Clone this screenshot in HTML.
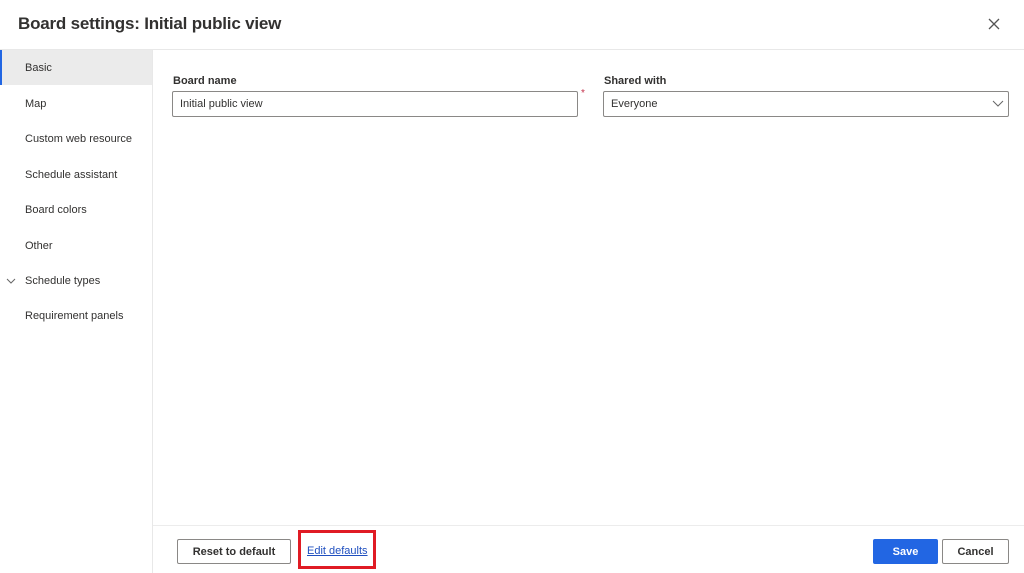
<!DOCTYPE html>
<html><head><style>
*{box-sizing:border-box;margin:0;padding:0}
body{width:1024px;height:573px;background:#fff;font-family:"Liberation Sans",sans-serif;color:#323130;position:relative;overflow:hidden}
.a{position:absolute}
.title{left:18px;top:14px;font-size:17px;font-weight:bold;color:#323130;letter-spacing:-0.2px}
.hdr{left:0;top:49px;width:1024px;height:1px;background:#e8e8e8}
.side{left:152px;top:50px;width:1px;height:523px;background:#e8e8e8}
.nav{left:0;width:152px;height:35px;font-size:11px;line-height:36px;padding-left:25px;color:#323130}
.sel{background:#ebebeb}
.bar{left:0;top:50px;width:2px;height:35px;background:#2266e3}
.lbl{font-size:11px;font-weight:bold;top:75px}
.inp{height:26px;border:1px solid #8a8886;border-radius:2px;font-size:11px;line-height:25px;padding-left:7px;top:91px}
.foot{left:153px;top:525px;width:871px;height:1px;background:#ececec}
.btn{top:539px;height:25px;border:1px solid #8a8886;border-radius:2px;font-size:11px;font-weight:bold;text-align:center;line-height:24px;background:#fff}
</style></head><body>
<div class="a title">Board settings: Initial public view</div>
<svg class="a" style="left:988px;top:18px" width="12" height="12" viewBox="0 0 12 12"><path d="M1 1L11 11M11 1L1 11" stroke="#555" stroke-width="1.3"/></svg>
<div class="a hdr"></div>
<div class="a side"></div>
<div class="a nav sel" style="top:50px">Basic</div>
<div class="a bar"></div>
<div class="a nav" style="top:86px">Map</div>
<div class="a nav" style="top:121px">Custom web resource</div>
<div class="a nav" style="top:157px">Schedule assistant</div>
<div class="a nav" style="top:192px">Board colors</div>
<div class="a nav" style="top:228px">Other</div>
<div class="a nav" style="top:263px">Schedule types</div>
<svg class="a" style="left:6px;top:278px" width="10" height="6" viewBox="0 0 10 6"><path d="M1 1L5 5L9 1" stroke="#666" fill="none" stroke-width="1"/></svg>
<div class="a nav" style="top:298px">Requirement panels</div>
<div class="a lbl" style="left:173px">Board name</div>
<div class="a inp" style="left:172px;width:406px">Initial public view</div>
<div class="a" style="left:581px;top:88px;color:#c4314b;font-size:10px">*</div>
<div class="a lbl" style="left:604px">Shared with</div>
<div class="a inp" style="left:603px;width:406px">Everyone</div>
<svg class="a" style="left:992px;top:100px" width="12" height="7" viewBox="0 0 12 7"><path d="M1 1L6 6L11 1" stroke="#666" fill="none" stroke-width="1"/></svg>
<div class="a foot"></div>
<div class="a btn" style="left:177px;width:114px">Reset to default</div>
<div class="a" style="left:307px;top:545px;font-size:11px;color:#1f4fbf;text-decoration:underline">Edit defaults</div>
<div class="a" style="left:298px;top:530px;width:78px;height:39px;border:3px solid #e01b24"></div>
<div class="a btn" style="left:873px;width:65px;background:#2266e3;border-color:#2266e3;color:#fff">Save</div>
<div class="a btn" style="left:942px;width:67px">Cancel</div>
</body></html>
